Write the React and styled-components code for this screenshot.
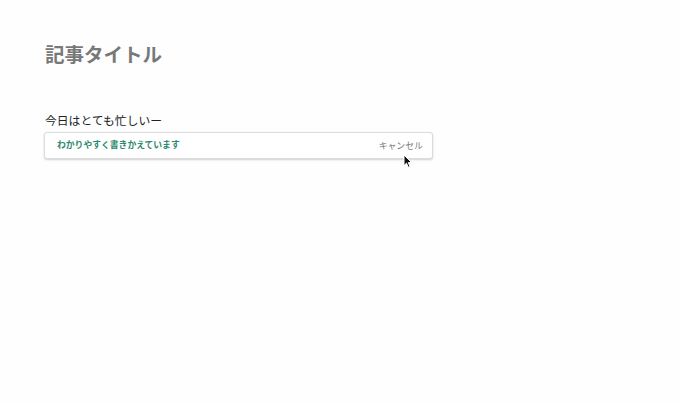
import React from 'react';
import styled, { createGlobalStyle } from 'styled-components';

const GlobalStyle = createGlobalStyle`
  html, body {
    margin: 0;
    padding: 0;
    background: #fefefe;
  }
  body {
    font-family: "Noto Sans CJK JP", "Noto Sans", sans-serif;
  }
`;

const Page = styled.div`
  width: 680px;
  height: 402px;
  padding: 38px 0 0 45px;
  box-sizing: border-box;
  position: relative;
`;

const Title = styled.h1`
  margin: 0;
  font-size: 19.5px;
  font-weight: 700;
  color: #787878;
  line-height: 32px;
`;

const Label = styled.p`
  margin: 41px 0 0;
  font-size: 11.8px;
  color: #222;
  line-height: 18px;
`;

const Bar = styled.div`
  margin: 3px 0 0 -1px;
  width: 389px;
  height: 27px;
  box-sizing: border-box;
  border: 1px solid #dcdcdc;
  border-radius: 3px;
  box-shadow: 0 1px 2px rgba(0, 0, 0, 0.18);
  background: #fff;
  display: flex;
  align-items: center;
  justify-content: space-between;
  padding: 0 9px 0 12px;
`;

const Status = styled.span`
  font-size: 8.8px;
  font-weight: 700;
  color: #2b8a6c;
  line-height: 1;
  margin-top: 0;
`;

const Cancel = styled.button`
  border: none;
  background: none;
  padding: 0;
  margin-top: 2px;
  font-family: inherit;
  font-size: 8.9px;
  color: #777;
  line-height: 1;
  cursor: pointer;
`;

const Pointer = styled.svg`
  position: absolute;
  left: 403px;
  top: 154px;
`;

export default function App() {
  return (
    <>
      <GlobalStyle />
      <Page>
        <Title>記事タイトル</Title>
        <Label>今日はとても忙しいー</Label>
        <Bar>
          <Status>わかりやすく書きかえています</Status>
          <Cancel>キャンセル</Cancel>
        </Bar>
        <Pointer width="10" height="15" viewBox="0 0 10 15">
          <path d="M1 1 L1 11.5 L3.5 9.2 L5.3 13.3 L7 12.6 L5.3 8.6 L8.6 8.6 Z" fill="#111" stroke="#fff" strokeWidth="1" strokeLinejoin="round" />
        </Pointer>
      </Page>
    </>
  );
}
